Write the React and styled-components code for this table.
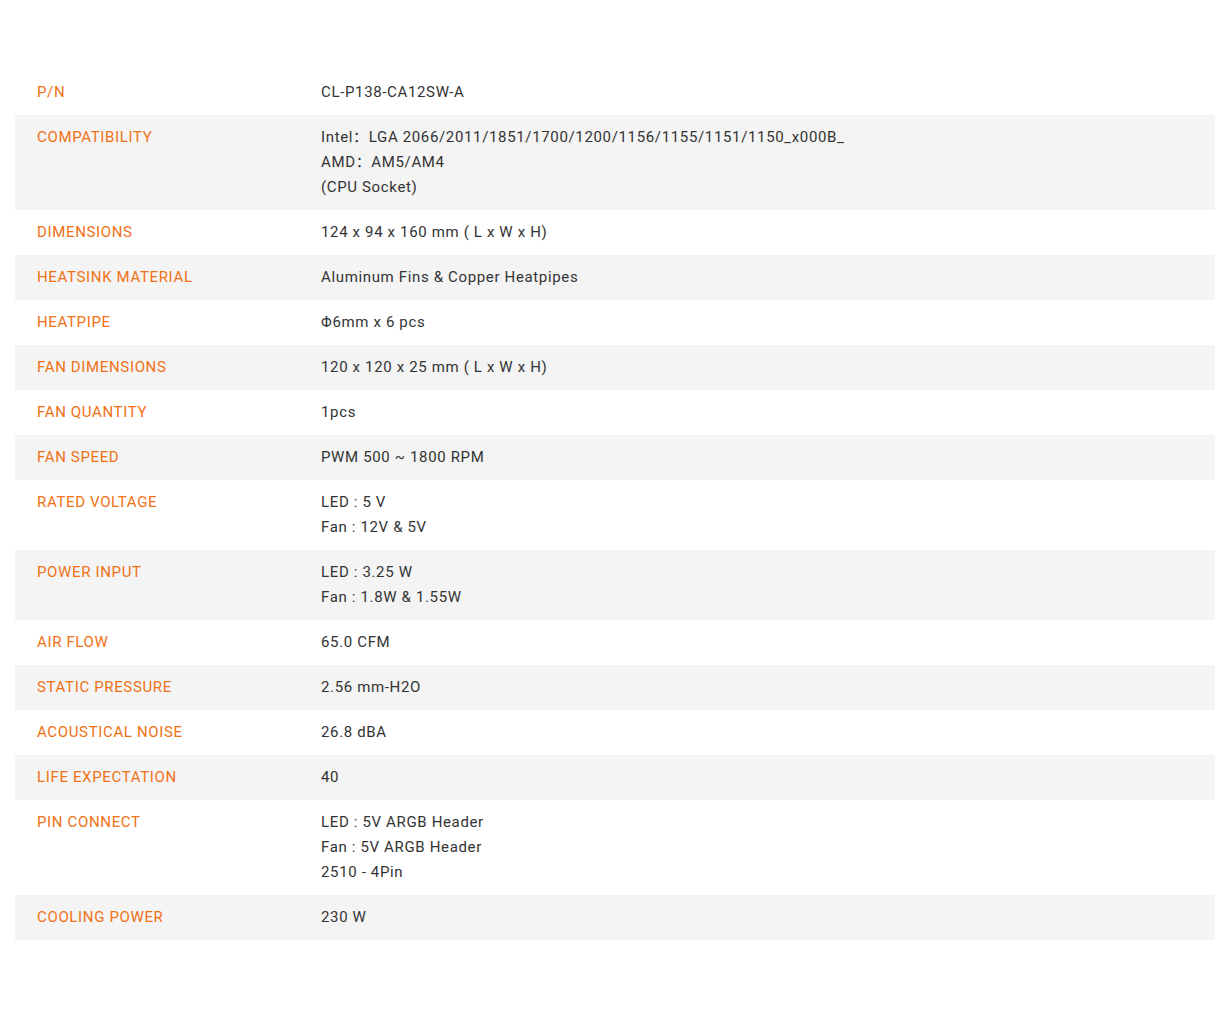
import React from 'react';
import styled, { createGlobalStyle } from 'styled-components';

const Global = createGlobalStyle`
  html, body { margin: 0; padding: 0; background: #fff; }
  body { font-family: Roboto, "Noto Sans CJK SC", "Noto Sans", Arial, sans-serif; }
`;

const Page = styled.div`
  padding: 70px 14px 70px 15px;
`;

const Table = styled.div`
  display: flex;
  flex-direction: column;
`;

const Row = styled.div`
  display: grid;
  grid-template-columns: 284px 1fr;
  background: ${p => (p.$alt ? '#f4f4f4' : '#fff')};
`;

const Cell = styled.div`
  padding: 10px 22px;
  font-size: 15px;
  line-height: 25px;
  letter-spacing: 0.65px;
`;

const Label = styled(Cell)`
  color: #f07114;
  text-transform: uppercase;
`;

const Value = styled(Cell)`
  color: #333;
`;

const Line = styled.div``;

const specs = [
  ['P/N', ['CL-P138-CA12SW-A']],
  ['Compatibility', ['Intel：LGA 2066/2011/1851/1700/1200/1156/1155/1151/1150_x000B_', 'AMD：AM5/AM4', '(CPU Socket)']],
  ['Dimensions', ['124 x 94 x 160 mm ( L x W x H)']],
  ['Heatsink Material', ['Aluminum Fins & Copper Heatpipes']],
  ['Heatpipe', ['Φ6mm x 6 pcs']],
  ['Fan Dimensions', ['120 x 120 x 25 mm ( L x W x H)']],
  ['Fan Quantity', ['1pcs']],
  ['Fan Speed', ['PWM 500 ~ 1800 RPM']],
  ['Rated Voltage', ['LED : 5 V', 'Fan : 12V & 5V']],
  ['Power Input', ['LED : 3.25 W', 'Fan : 1.8W & 1.55W']],
  ['Air Flow', ['65.0 CFM']],
  ['Static Pressure', ['2.56 mm-H2O']],
  ['Acoustical Noise', ['26.8 dBA']],
  ['Life Expectation', ['40']],
  ['Pin Connect', ['LED : 5V ARGB Header', 'Fan : 5V ARGB Header', '2510 - 4Pin']],
  ['Cooling Power', ['230 W']],
];

export default function App() {
  return (
    <Page>
      <Global />
      <Table>
        {specs.map(([label, lines], i) => (
          <Row key={label} $alt={i % 2 === 1}>
            <Label>{label}</Label>
            <Value>
              {lines.map((l, j) => (
                <Line key={j}>{l}</Line>
              ))}
            </Value>
          </Row>
        ))}
      </Table>
    </Page>
  );
}
